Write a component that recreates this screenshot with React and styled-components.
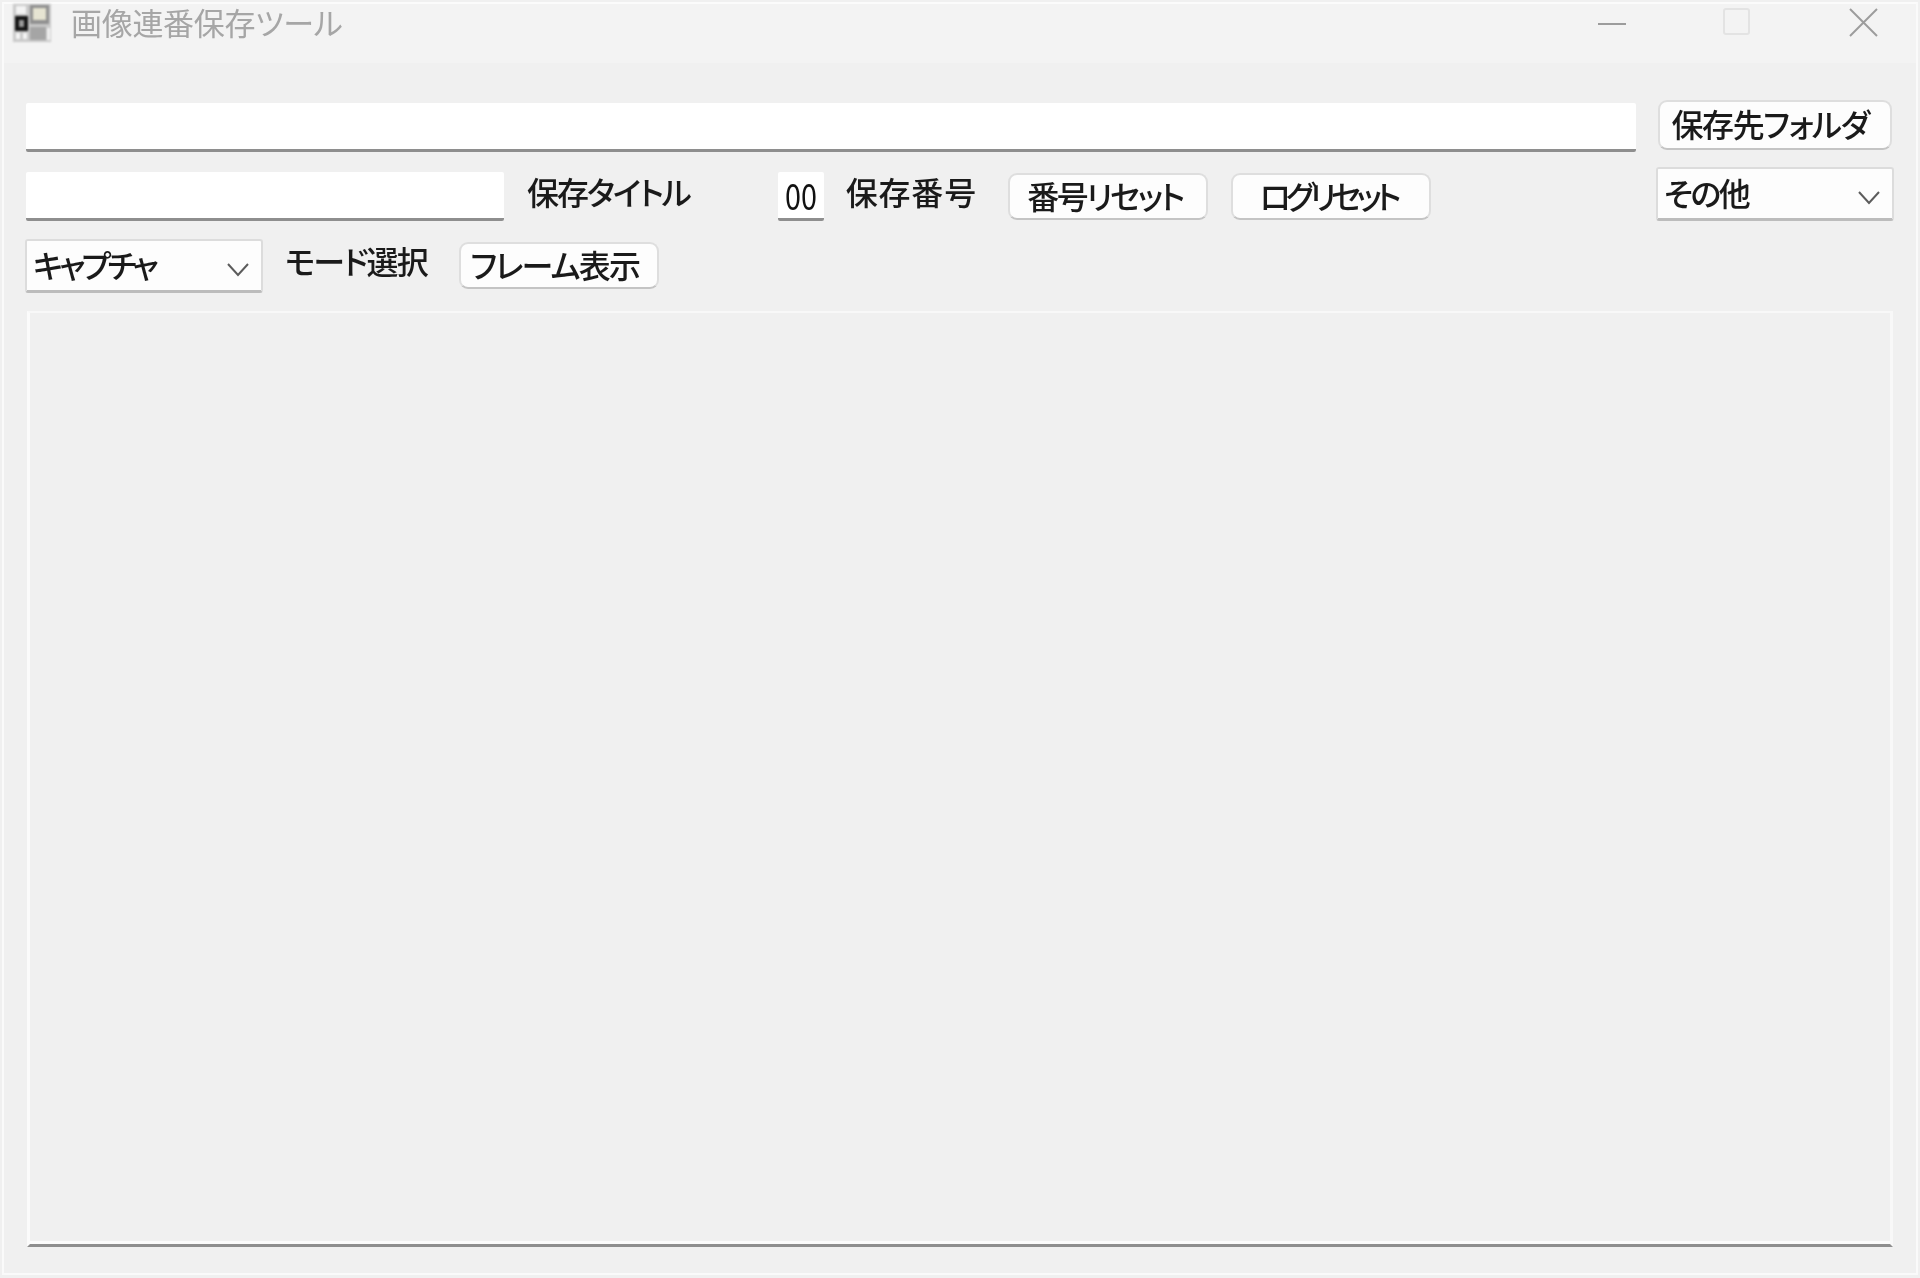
import React from "react";
import styled, { createGlobalStyle } from "styled-components";

const Global = createGlobalStyle`
  html, body { margin: 0; padding: 0; background: #f0f0f0; }
  * { box-sizing: border-box; }
`;

const FONT = `"Noto Sans CJK JP", "Noto Sans", sans-serif`;

const Window = styled.div`
  width: 1920px;
  height: 1278px;
  background: #f0f0f0;
  padding: 2px 2px 3px 2px;
  font-family: ${FONT};
  font-feature-settings: "palt";
  overflow: hidden;
`;

const Frame = styled.div`
  height: 100%;
  display: flex;
  flex-direction: column;
  border-left: 2px solid #fafafa;
  border-right: 2px solid #fafafa;
  border-bottom: 2px solid #fafafa;
  border-top: 2px solid #fbfbfb;
`;

const TitleBar = styled.div`
  height: 59px;
  flex: none;
  display: flex;
  align-items: flex-start;
  background: #f3f3f3;
  padding: 0 0 0 9px;
`;

const AppIcon = styled.svg`
  width: 38px;
  height: 38px;
  flex: none;
  filter: blur(0.8px);
`;

const Title = styled.div`
  margin-left: 20px;
  margin-top: -1px;
  font-size: 31px;
  line-height: 38px;
  letter-spacing: -0.3px;
  color: #a6a6a6;
  filter: blur(0.4px);
`;

const Captions = styled.div`
  margin-left: auto;
  display: flex;
  align-items: flex-start;
  gap: 95px;
  padding: 2px 36px 0 0;
`;

const CapIcon = styled.svg`
  width: 32px;
  height: 32px;
  flex: none;
  stroke: ${(p) => p.$color || "#9c9c9c"};
  stroke-width: 2;
  fill: none;
`;

const Content = styled.div`
  flex: 1;
  display: flex;
  flex-direction: column;
  padding: 40px 22px 26px 22px;
`;

const PathRow = styled.div`
  display: flex;
  align-items: flex-start;
  gap: 22px;
  height: 68px;
  padding-right: 2px;
`;

const OptionRow = styled.div`
  display: flex;
  align-items: flex-start;
  height: 68px;
`;

const ModeRow = styled.div`
  display: flex;
  align-items: flex-start;
  height: 72px;
`;

const TextField = styled.div`
  height: ${(p) => p.$h || 49}px;
  width: ${(p) => (p.$w ? `${p.$w}px` : "auto")};
  margin-left: ${(p) => p.$ml || 0}px;
  margin-top: ${(p) => p.$mt || 0}px;
  flex: ${(p) => (p.$w ? "none" : 1)};
  background: #fff;
  border-bottom: 3px solid #8e8e8e;
  border-radius: 2px;
  display: flex;
  align-items: center;
  justify-content: center;
  padding-bottom: 3px;
  color: #111;
  filter: blur(0.3px);
`;

const Digits = styled.span`
  display: inline-block;
  font-size: 36px;
  line-height: 1;
  transform: scaleX(0.8);
`;

const Label = styled.div`
  margin-left: ${(p) => p.$ml}px;
  margin-top: ${(p) => p.$mt || 0}px;
  font-size: 32px;
  font-weight: 500;
  line-height: 44px;
  letter-spacing: ${(p) => p.$track || 0}px;
  color: #1a1a1a;
  white-space: nowrap;
  filter: blur(0.4px);
`;

const Button = styled.div`
  width: ${(p) => p.$w}px;
  height: ${(p) => p.$h || 47}px;
  margin-left: ${(p) => p.$ml || 0}px;
  margin-top: ${(p) => p.$mt || 0}px;
  flex: none;
  background: #fdfdfd;
  border: 2px solid #dedede;
  border-bottom-color: #c4c4c4;
  border-radius: 9px;
  display: flex;
  align-items: center;
  justify-content: center;
  padding: 0 ${(p) => p.$pr || 0}px 4px 0;
  font-size: 32px;
  font-weight: 500;
  line-height: 1;
  letter-spacing: ${(p) => p.$track || 0}px;
  color: #1a1a1a;
  white-space: nowrap;
  filter: blur(0.4px);
`;

const Combo = styled.div`
  width: ${(p) => p.$w}px;
  height: 54px;
  margin-left: ${(p) => p.$ml || "0"};
  margin-top: ${(p) => p.$mt || 0}px;
  flex: none;
  background: #fdfdfd;
  border: 2px solid #dcdcdc;
  border-bottom: 3px solid #bcbcbc;
  border-radius: 3px;
  display: flex;
  align-items: center;
  justify-content: space-between;
  padding: 0 11px 4px 6px;
  font-size: 32px;
  font-weight: 500;
  line-height: 1;
  letter-spacing: ${(p) => p.$track || 0}px;
  color: #1a1a1a;
  filter: blur(0.4px);
`;

const Chevron = styled.svg`
  width: 24px;
  height: 16px;
  flex: none;
  fill: none;
  stroke: #5c5c5c;
  stroke-width: 2;
  margin-top: 12px;
`;

const Panel = styled.div`
  flex: 1;
  margin: 0 1px;
  background: #f0f0f0;
  border-top: 2px solid #f8f8f8;
  border-left: 3px solid #fbfbfb;
  border-right: 3px solid #f8f8f8;
  border-bottom: 3px solid #8e8e8e;
  box-shadow: inset 0 -3px 0 #fbfbfb;
`;

const Arrow = () => (
  <Chevron viewBox="0 0 24 16">
    <path d="M2 2 L12 13 L22 2" />
  </Chevron>
);

const App = () => (
  <>
    <Global />
    <Window>
      <Frame>
        <TitleBar>
          <AppIcon viewBox="0 0 38 38">
            <rect x="0" y="0" width="38" height="38" fill="#c9c9c9" />
            <rect x="3" y="2" width="10" height="8" fill="#f4f4f4" />
            <rect x="17" y="1" width="19" height="19" fill="#8f8f8f" />
            <rect x="20" y="4" width="13" height="12" fill="#e6e4d2" />
            <rect x="2" y="12" width="13" height="15" fill="#151515" />
            <rect x="6" y="16" width="5" height="7" fill="#9a9a9a" />
            <rect x="3" y="29" width="4" height="6" fill="#f6f6f6" />
            <rect x="10" y="29" width="4" height="6" fill="#f6f6f6" />
            <rect x="17" y="23" width="16" height="13" fill="#a5a5a5" />
            <rect x="34" y="24" width="3" height="12" fill="#f2f2f2" />
          </AppIcon>
          <Title>画像連番保存ツール</Title>
          <Captions>
            <CapIcon viewBox="0 0 32 32">
              <path d="M4 18 H32" />
            </CapIcon>
            <CapIcon viewBox="0 0 32 32" $color="#e3e3e3">
              <rect x="3" y="3" width="25" height="25" rx="2" />
            </CapIcon>
            <CapIcon viewBox="0 0 32 32">
              <path d="M2 3 L29 30 M29 3 L2 30" />
            </CapIcon>
          </Captions>
        </TitleBar>
        <Content>
          <PathRow>
            <TextField />
            <Button $w={234} $h={50} $mt={-3} $track={-1.4} $pr={10}>保存先フォルダ</Button>
          </PathRow>
          <OptionRow>
            <TextField $w={478} $mt={1} />
            <Label $ml={23} $mt={-2} $track={-2}>保存タイトル</Label>
            <TextField $w={46} $ml={88} $mt={1}><Digits>00</Digits></TextField>
            <Label $ml={22} $mt={-2} $track={0.8}>保存番号</Label>
            <Button $w={200} $ml={31} $mt={2} $track={-2.5} $pr={6}>番号リセット</Button>
            <Button $w={200} $ml={23} $mt={2} $track={-5} $pr={6}>ログリセット</Button>
            <Combo $w={238} $ml="auto" $mt={-4} $track={-2.5}>
              その他
              <Arrow />
            </Combo>
          </OptionRow>
          <ModeRow>
            <Combo $w={238} $ml="-1px" $track={-3.7}>
              キャプチャ
              <Arrow />
            </Combo>
            <Label $ml={22} $mt={-1} $track={-1.9}>モード選択</Label>
            <Button $w={200} $ml={32} $mt={3} $track={-1.8} $pr={8}>フレーム表示</Button>
          </ModeRow>
          <Panel />
        </Content>
      </Frame>
    </Window>
  </>
);

export default App;
